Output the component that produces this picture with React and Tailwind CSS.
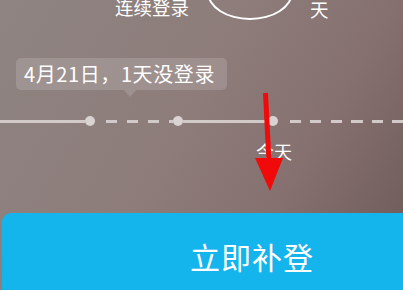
import React from 'react';

const font = { fontFamily: '"Noto Sans CJK SC", "Noto Sans", sans-serif' };

// dashed stretch of the timeline
const Dashes = ({ className }) => (
    <div className={"h-[3px] bg-[repeating-linear-gradient(90deg,#d2cac8_0_11px,transparent_11px_21px)] " + className} />
);

const Dot = () => <div className="w-[10px] h-[10px] rounded-full bg-[#d9d3d1] shrink-0" />;

export default function App() {
    return (
        <div
            style={font}
            className="relative w-[403px] h-[290px] overflow-hidden flex flex-col text-white bg-[linear-gradient(120deg,#8e8481_0%,#8d7c7a_45%,#85706f_70%,#6b5857_100%)]"
        >
            {/* header: streak counter */}
            <div className="flex items-start h-[22px] shrink-0">
                <span className="ml-[115px] -mt-[3px] text-[18.5px] leading-[20px]">连续登录</span>
                <div className="ml-[18px] -mt-[36px] w-[86px] h-[56px] rounded-[50%] border-[2.5px] border-white shrink-0" />
                <span className="ml-[17px] -mt-[1px] text-[18.5px] leading-[20px]">天</span>
            </div>

            {/* tooltip */}
            <div className="mt-[36px] ml-[16px] w-[211px] h-[32px] rounded-[5px] bg-white/15 pl-[8px] text-[20px] leading-[32px] tracking-[0.6px] whitespace-nowrap">
                4月21日，1天没登录
            </div>
            <div className="ml-[124px] w-0 h-0 border-x-[6px] border-x-transparent border-t-[7px] border-t-white/15" />

            {/* timeline */}
            <div className="mt-[19px] flex items-center h-[10px]">
                <div className="w-[85px] h-[3px] bg-[#d2cac8]" />
                <Dot />
                <Dashes className="ml-[11px] w-[67px]" />
                <Dot />
                <div className="w-[85px] h-[3px] bg-[#d2cac8]" />
                <Dot />
                <div className="ml-[12px] flex-1 h-[3px] bg-[repeating-linear-gradient(90deg,#d2cac8_0_11px,transparent_11px_20.5px)]" />
            </div>
            <div className="mt-[15px] ml-[256px] text-[18px] leading-[20px]">今天</div>

            {/* button */}
            <div className="mt-auto ml-[2px] -mr-[20px] h-[77px] rounded-tl-[9px] rounded-tr-[9px] bg-[#14b4ec] pl-[188px] pt-[28px] text-[30px] leading-[30px] tracking-[1px]">
                立即补登
            </div>

            {/* red annotation arrow */}
            <svg className="absolute left-0 top-0" width="403" height="290">
                <line x1="265.5" y1="93" x2="269" y2="162" stroke="#f00a0a" strokeWidth="5" />
                <polygon points="255,158 283,158 270,191" fill="#f00a0a" />
            </svg>
        </div>
    );
}
